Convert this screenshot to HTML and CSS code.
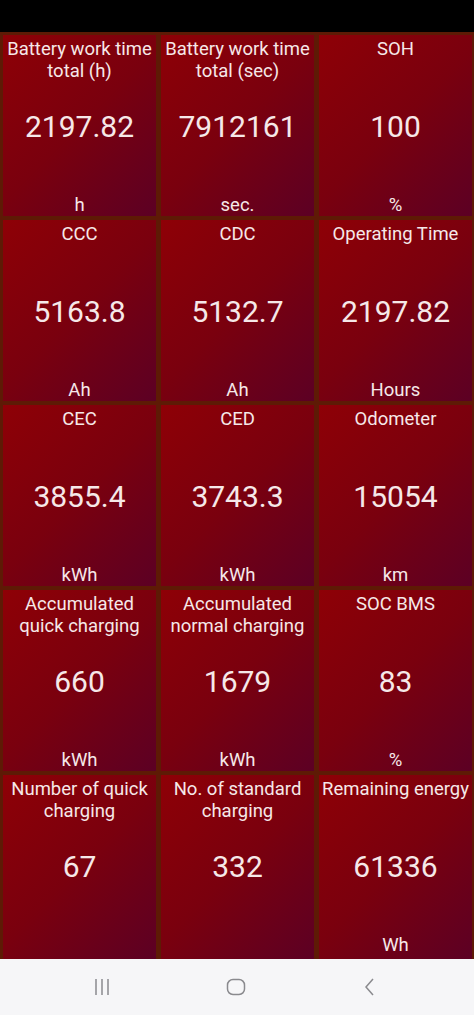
FILE: index.html
```html
<!DOCTYPE html>
<html>
<head lang="en">
    <meta charset="UTF-8">
    <title>Battery</title>
    <link rel="stylesheet" href="styles.css">
</head>
<body>
<div id="status"></div>
<div id="grid">
    <div class="cell"><p class="name">Battery work time total (h)</p><p class="val">2197.82</p><p class="unit">h</p></div>
    <div class="cell"><p class="name">Battery work time total (sec)</p><p class="val">7912161</p><p class="unit">sec.</p></div>
    <div class="cell"><p class="name">SOH</p><p class="val">100</p><p class="unit">%</p></div>

    <div class="cell"><p class="name">CCC</p><p class="val">5163.8</p><p class="unit">Ah</p></div>
    <div class="cell"><p class="name">CDC</p><p class="val">5132.7</p><p class="unit">Ah</p></div>
    <div class="cell"><p class="name">Operating Time</p><p class="val">2197.82</p><p class="unit">Hours</p></div>

    <div class="cell"><p class="name">CEC</p><p class="val">3855.4</p><p class="unit">kWh</p></div>
    <div class="cell"><p class="name">CED</p><p class="val">3743.3</p><p class="unit">kWh</p></div>
    <div class="cell"><p class="name">Odometer</p><p class="val">15054</p><p class="unit">km</p></div>

    <div class="cell"><p class="name">Accumulated quick charging</p><p class="val">660</p><p class="unit">kWh</p></div>
    <div class="cell"><p class="name">Accumulated normal charging</p><p class="val">1679</p><p class="unit">kWh</p></div>
    <div class="cell"><p class="name">SOC BMS</p><p class="val">83</p><p class="unit">%</p></div>

    <div class="cell last"><p class="name">Number of quick charging</p><p class="val">67</p><p class="unit"></p></div>
    <div class="cell last"><p class="name">No. of standard charging</p><p class="val">332</p><p class="unit"></p></div>
    <div class="cell last"><p class="name">Remaining energy</p><p class="val">61336</p><p class="unit">Wh</p></div>
</div>
<div id="nav">
    <svg width="20" height="20" viewBox="0 0 20 20"><path d="M4 2v16M10 2v16M16 2v16" stroke="#8a8a8e" stroke-width="1.5" fill="none"/></svg>
    <svg width="20" height="20" viewBox="0 0 20 20"><rect x="1.5" y="2.5" width="17" height="15" rx="5.5" stroke="#8a8a8e" stroke-width="1.5" fill="none"/></svg>
    <svg width="20" height="20" viewBox="0 0 20 20"><path d="M14 2l-7 8 7 8" stroke="#8a8a8e" stroke-width="1.5" fill="none"/></svg>
</div>
</body>
</html>
```

FILE: styles.css
```css
*{
    margin: 0;
    padding: 0;
}
body{
    width: 474px;
    height: 1015px;
    display: flex;
    flex-direction: column;
    overflow: hidden;
    font-family: Roboto, "Liberation Sans", sans-serif;
    background: #000;
}
#status{
    height: 32px;
    background: #000;
}
#grid{
    flex: 1;
    overflow: hidden;
    display: grid;
    grid-template-columns: repeat(3, 153px);
    grid-template-rows: repeat(4, 181px) 184px;
    gap: 4px 5px;
    padding: 3px 2px 0 3px;
    background: #5e1a05;
}
.cell{
    display: grid;
    grid-template-rows: 1fr auto 1fr;
    text-align: center;
    color: #f6e8e8;
    padding: 3px 1px 0;
    background: linear-gradient(135deg, #8e0006 0%, #7a000e 50%, #5c0024 100%);
}
.cell.last{
    padding-bottom: 3px;
}
.name{
    font-size: 18.5px;
    line-height: 22px;
    align-self: start;
}
.val{
    font-size: 30px;
    line-height: 34px;
}
.unit{
    font-size: 18.5px;
    line-height: 22px;
    align-self: end;
}
#nav{
    height: 56px;
    flex-shrink: 0;
    background: #f6f6f8;
    display: flex;
    justify-content: space-between;
    align-items: center;
    padding: 0 95px 0 92px;
}
```
